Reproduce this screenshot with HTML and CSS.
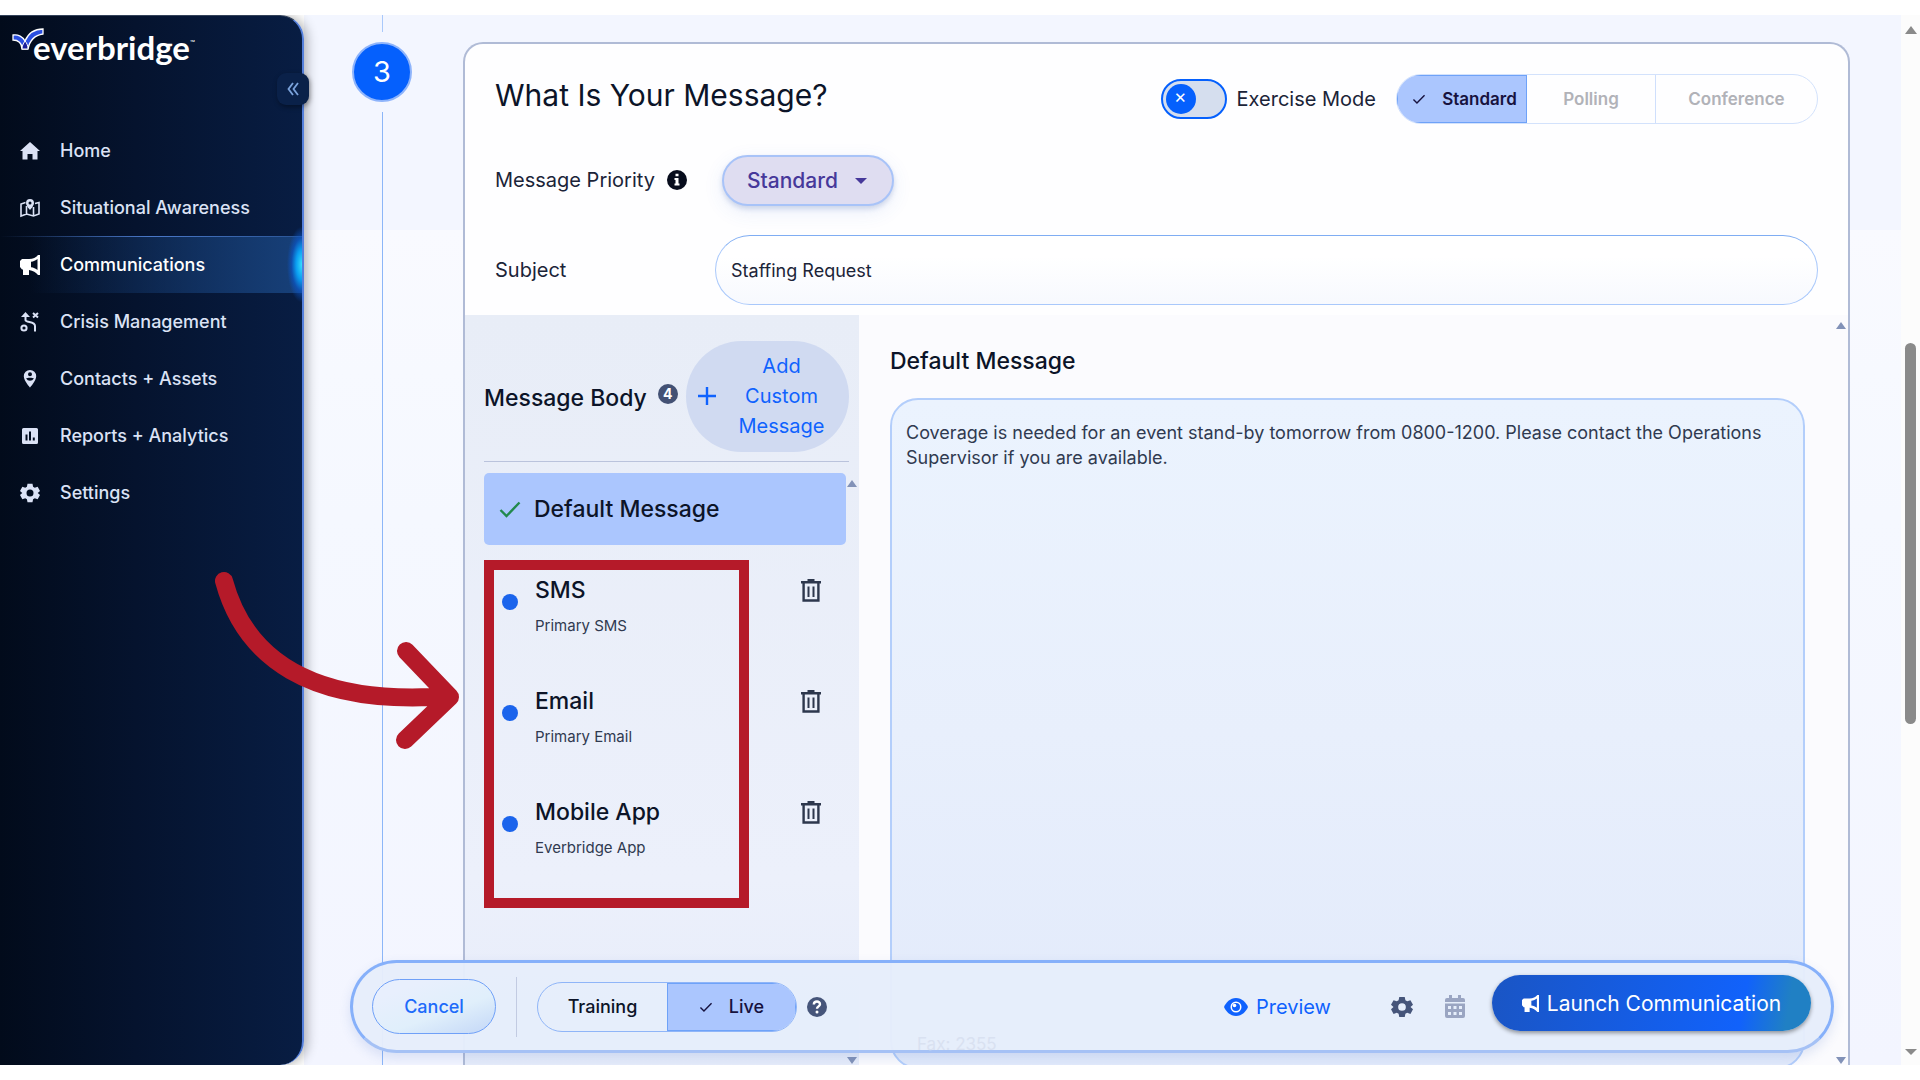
FILE: index.html
```html
<!DOCTYPE html>
<html lang="en">
<head>
    <meta charset="UTF-8">
    <meta name="viewport" content="width=device-width, initial-scale=1.0">
    <title>Everbridge - New Communication</title>
    <link rel="stylesheet" href="styles.css">
</head>
<body>
    <!-- Shared icons -->
    <svg class="sprite" aria-hidden="true">
        <symbol id="i-check" viewBox="0 0 24 24"><path d="M2.5 13l6 6L21.500 5.500" fill="none" stroke="currentColor" stroke-width="2.400"/></symbol>
        <symbol id="i-horn" viewBox="0 0 20 20"><path fill="currentColor" fill-rule="evenodd" d="M20 0v20h-2c-2-2.500-5-4.500-9-5V20H3v-5.500H2L0 12V6l2-2h7c4 0 7-1.500 9-4zM17.500 4c-1.800 1.500-4 2.500-6.500 2.800v5.500c2.500.300 4.700 1.200 6.500 2.700z"/></symbol>
        <symbol id="i-gear" viewBox="0 0 24 24"><path fill="currentColor" fill-rule="evenodd" d="M9 1h6l.7 3.600 2 1.100L21.200 4.500l2.800 5-2.700 2.500 2.700 2.500-2.800 5-3.500-1.200-2 1.100L15 23H9l-.7-3.600-2-1.100-3.500 1.200-2.800-5L2.700 12 0 9.500l2.800-5 3.500 1.200 2-1.100zM12 7.800a4.200 4.200 0 1 0 0 8.400 4.200 4.200 0 0 0 0-8.400z"/></symbol>
        <symbol id="i-trash" viewBox="0 0 20 24"><path fill="none" stroke="currentColor" stroke-width="2.400" d="M0 3.200h20M6.500 1.200h7M2.600 3v18.500h14.800V3"/><path fill="none" stroke="currentColor" stroke-width="2" d="M7.500 7.500v10.500M12.500 7.500v10.500"/></symbol>
    </svg>

    <div class="app">
        <aside class="sidebar">
            <a class="brand" href="#" aria-label="everbridge home">
                <svg class="brand-mark" viewBox="0 0 32 23">
                    <path d="M1 7C6 6 11 9 13 13C16 6 22 1 31 1V6C24 7 18 11 16 21H10C10 15 6 12 1 12Z" fill="#2b4fe0" stroke="#fff" stroke-width="1.300"/>
                    <path d="M13 13C11 16 10 18 10 21H16C16 18 15 15 13 13Z" fill="#1a1f9c" stroke="#fff" stroke-width="1"/>
                </svg>
                <span class="brand-name">everbridge</span><span class="brand-tm">™</span>
            </a>
            <button class="collapse" aria-label="Collapse menu">
                <svg viewBox="0 0 12 14" width="12" height="14"><path d="M6 1L1.500 7 6 13M11 1L6.500 7 11 13" fill="none" stroke="currentColor" stroke-width="1.800"/></svg>
            </button>
            <nav class="menu">
                <a href="#"><svg viewBox="0 0 20 20"><path fill="currentColor" d="M10 1L0 10h2.500v8.500h5v-5.500h5v5.500h5V10H20z"/></svg>Home</a>
                <a href="#"><svg viewBox="0 0 20 20"><path fill="none" stroke="currentColor" stroke-width="1.600" d="M5.500 4.500L1 6v12l5.500-2 7 2 5.500-2V4.500l-4 1M6.500 8v8M13.500 9v9"/><path fill="currentColor" fill-rule="evenodd" d="M10 1a4 4 0 0 1 4 4c0 3-4 7-4 7S6 8 6 5a4 4 0 0 1 4-4zm0 2.500a1.500 1.500 0 1 0 0 3 1.500 1.500 0 0 0 0-3z"/></svg>Situational Awareness</a>
                <a href="#" class="active" aria-current="page"><svg viewBox="0 0 20 20"><use href="#i-horn"/></svg>Communications</a>
                <a href="#"><svg viewBox="0 0 20 20"><g fill="none" stroke="currentColor" stroke-width="2"><circle cx="4" cy="16" r="2.600"/><path d="M5.500 2v6c0 3 9.500 1 9.500 6v5.500M13 1l5 4.500M18 1l-5 4.500"/></g><path fill="currentColor" d="M5.500 0L10 5H1z"/></svg>Crisis Management</a>
                <a href="#"><svg viewBox="0 0 20 20"><path fill="currentColor" fill-rule="evenodd" d="M10 1a6.200 6.200 0 0 1 6.200 6.300C16.200 12 10 18.500 10 18.500S3.800 12 3.800 7.300A6.200 6.200 0 0 1 10 1zm0 2.300a2 2 0 1 0 0 4 2 2 0 0 0 0-4zM6 9.300c1 1.700 2.400 2.500 4 2.500s3-.8 4-2.500c-1.200-.900-6.800-.9-8 0z"/></svg>Contacts + Assets</a>
                <a href="#"><svg viewBox="0 0 20 20"><path fill="currentColor" fill-rule="evenodd" d="M3.500 2h13A1.500 1.500 0 0 1 18 3.500v13a1.500 1.500 0 0 1-1.500 1.500h-13A1.500 1.500 0 0 1 2 16.500v-13A1.500 1.500 0 0 1 3.500 2zM5.500 8.500v6h2v-6zM9 5.500v9h2v-9zM12.800 11.500v3h2v-3z"/></svg>Reports + Analytics</a>
                <a href="#"><svg viewBox="0 0 24 24"><use href="#i-gear"/></svg>Settings</a>
            </nav>
        </aside>

        <main class="page">
            <div class="step">
                <span class="step-number">3</span>
            </div>

            <section class="card">
                <header class="card-top">
                    <h1>What Is Your Message?</h1>
                    <label class="switch">
                        <input type="checkbox">
                        Exercise Mode
                    </label>
                    <div class="segments types">
                        <button class="on"><svg viewBox="0 0 24 24" width="14" height="14"><use href="#i-check"/></svg>Standard</button>
                        <button disabled>Polling</button>
                        <button disabled>Conference</button>
                    </div>
                </header>

                <div class="field priority">
                    <label for="priority">Message Priority</label>
                    <svg class="info" viewBox="0 0 20 20" width="20" height="20"><circle cx="10" cy="10" r="10" fill="#070c1c"/><path fill="#fff" d="M8.500 3.700h3v2.600h-3zM7.500 8h4v5.500h1v2h-5v-2h1V10h-1z"/></svg>
                    <div class="select-wrap">
                        <select id="priority">
                            <option>Standard</option>
                            <option>High</option>
                        </select>
                    </div>
                </div>

                <div class="field subject">
                    <label for="subject">Subject</label>
                    <input type="text" id="subject" value="Staffing Request">
                </div>

                <div class="composer">
                    <div class="bodies">
                        <div class="bodies-head">
                            <h2>Message Body</h2>
                            <span class="count">4</span>
                            <button class="add">
                                <svg viewBox="0 0 18 18" width="18" height="18"><path d="M9 0v18M0 9h18" stroke="currentColor" stroke-width="2.400"/></svg>
                                <span>Add Custom Message</span>
                            </button>
                        </div>
                        <ul class="body-list">
                            <li class="selected">
                                <svg viewBox="0 0 24 24" width="24" height="24"><use href="#i-check"/></svg>
                                <h3>Default Message</h3>
                            </li>
                            <li>
                                <span class="dot"></span>
                                <div><h3>SMS</h3><p>Primary SMS</p></div>
                                <button class="trash" aria-label="Delete SMS"><svg viewBox="0 0 20 24" width="20" height="24"><use href="#i-trash"/></svg></button>
                            </li>
                            <li>
                                <span class="dot"></span>
                                <div><h3>Email</h3><p>Primary Email</p></div>
                                <button class="trash" aria-label="Delete Email"><svg viewBox="0 0 20 24" width="20" height="24"><use href="#i-trash"/></svg></button>
                            </li>
                            <li>
                                <span class="dot"></span>
                                <div><h3>Mobile App</h3><p>Everbridge App</p></div>
                                <button class="trash" aria-label="Delete Mobile App"><svg viewBox="0 0 20 24" width="20" height="24"><use href="#i-trash"/></svg></button>
                            </li>
                        </ul>
                        <i class="arrow up list-up"></i>
                        <i class="arrow down list-down"></i>
                        <div class="highlight"></div>
                    </div>
                    <div class="editor">
                        <h2><label for="message">Default Message</label></h2>
                        <textarea id="message">Coverage is needed for an event stand-by tomorrow from 0800-1200. Please contact the Operations Supervisor if you are available.</textarea>
                        <i class="arrow up pane-up"></i>
                        <i class="arrow down pane-down"></i>
                    </div>
                </div>
            </section>

            <footer class="actions">
                <button class="cancel">Cancel</button>
                <span class="rule"></span>
                <div class="segments modes">
                    <button>Training</button>
                    <button class="on"><svg viewBox="0 0 24 24" width="14" height="14"><use href="#i-check"/></svg>Live</button>
                </div>
                <svg class="help" viewBox="0 0 20 20" width="20" height="20"><circle cx="10" cy="10" r="10" fill="#46557a"/><path d="M6.800 7.500C7 3.500 13 3.700 13 7.200c0 2.200-3 2.200-3 4.600" fill="none" stroke="#fff" stroke-width="2.400"/><circle cx="10" cy="15" r="1.500" fill="#fff"/></svg>
                <span class="fax">Fax: 2355</span>
                <a class="preview" href="#">
                    <svg viewBox="0 0 24 18" width="24" height="18"><path fill="currentColor" d="M12 0c6 0 10 4.500 12 9-2 4.500-6 9-12 9S2 13.500 0 9c2-4.500 6-9 12-9z"/><circle cx="12" cy="9" r="5.500" fill="#fff"/><circle cx="12" cy="9" r="4" fill="currentColor"/><circle cx="10.500" cy="7.500" r="1.800" fill="#fff"/></svg>
                    Preview
                </a>
                <button class="icon-btn" aria-label="Settings"><svg viewBox="0 0 24 24" width="22" height="22"><use href="#i-gear"/></svg></button>
                <button class="icon-btn schedule" aria-label="Schedule" disabled><svg viewBox="0 0 20 23" width="20" height="23"><path fill="currentColor" fill-rule="evenodd" d="M4 0h3v3h6V0h3v3h2a2 2 0 0 1 2 2v2H0V5a2 2 0 0 1 2-2h2zM0 8.500h20V21a2 2 0 0 1-2 2H2a2 2 0 0 1-2-2zM3 11v3h3v-3zM8.500 11v3h3v-3zM14 11v3h3v-3zM3 17v3h3v-3zM8.500 17v3h3v-3zM14 17v3h3v-3z"/></svg></button>
                <button class="launch"><svg viewBox="0 0 20 20" width="17" height="17"><use href="#i-horn"/></svg>Launch Communication</button>
            </footer>
        </main>

        <div class="scrollbar">
            <i class="arrow up"></i>
            <span class="thumb"></span>
            <i class="arrow down"></i>
        </div>

        <svg class="pointer" viewBox="0 0 250 184" width="250" height="184"><path d="M13 12C33 86 96 138 238 127M195 82L239 128L194 171" fill="none" stroke="#b51a29" stroke-width="18" stroke-linecap="round" stroke-linejoin="round"/></svg>
    </div>
</body>
</html>
```

FILE: styles.css
```css
* {
    box-sizing: border-box;
}
body {
    font-family: Inter, "Liberation Sans", sans-serif;
    margin: 0;
    padding: 15px 0;
    height: 100vh;
    background: #fff;
    color: #0c1428;
    overflow: hidden;
}
h1, h2, h3, p, ul {
    margin: 0;
    padding: 0;
}
button, input, select, textarea {
    font-family: inherit;
    color: inherit;
}
button {
    border: none;
    background: none;
    padding: 0;
    cursor: pointer;
}
a {
    text-decoration: none;
}
svg {
    flex: none;
}
.sprite {
    display: none;
}
.app {
    display: flex;
    height: 100%;
    position: relative;
    overflow: hidden;
}

/* Sidebar */
.sidebar {
    flex: none;
    width: 304px;
    background: linear-gradient(90deg, #020b1b 0%, #05132e 45%, #081d43 100%);
    border-right: 2px solid #5580dc;
    border-top: 1px solid #33425a;
    border-radius: 0 24px 24px 0;
    box-shadow: 3px 0 12px rgba(0, 0, 0, 0.3);
    position: relative;
    z-index: 2;
}
.brand {
    display: flex;
    padding: 12px 0 0 12px;
    height: 106px;
    color: #fff;
}
.brand-mark {
    width: 32px;
    height: 23px;
}
.brand-name {
    font-family: Lato, sans-serif;
    font-size: 33px;
    font-weight: 700;
    line-height: 38px;
    margin-left: -11px;
}
.brand-tm {
    font-size: 8px;
    margin-top: 10px;
}
.collapse {
    position: absolute;
    top: 57px;
    right: -7px;
    width: 32px;
    height: 32px;
    border-radius: 9px;
    background: #0a2149;
    color: #7ba3dc;
    box-shadow: 1px 2px 5px rgba(0, 0, 0, 0.4);
}
.collapse svg {
    display: block;
    margin: auto;
}
.menu a {
    display: flex;
    align-items: center;
    gap: 20px;
    height: 57px;
    padding-left: 20px;
    font-size: 18px;
    font-weight: 500;
    color: #dbe2f5;
}
.menu svg {
    width: 20px;
    height: 20px;
}
.menu .active {
    position: relative;
    color: #fff;
    background:
        linear-gradient(90deg, transparent, #4a78c8 50%, #2a5596) top / 100% 1px no-repeat,
        linear-gradient(90deg, transparent 10%, #174079 100%);
}
.menu .active::after {
    content: "";
    position: absolute;
    right: 0;
    top: -10px;
    bottom: -10px;
    width: 16px;
    background: radial-gradient(ellipse 15px 38px at 100% 50%, #35e0ff 0%, #0a9cf0 40%, rgba(10, 90, 210, 0.6) 70%, transparent 100%);
}

/* Page */
.page {
    flex: 1;
    min-width: 0;
    display: flex;
    position: relative;
    background: linear-gradient(#f3f6ff 215px, #f9faff 215px, #f5f8ff 500px, #f3f5ff 100%);
}
.step {
    flex: none;
    width: 159px;
    background: linear-gradient(#8cb6f8, #8cb6f8) 78px 97px / 1px 100% no-repeat,
        linear-gradient(#a9c9fb, #a9c9fb) 78px 0 / 1px 17px no-repeat;
    padding: 27px 0 0 48px;
}
.step-number {
    display: block;
    width: 60px;
    height: 60px;
    border: 2px solid #8eb4fb;
    border-radius: 50%;
    background: #0560fd;
    color: #fff;
    font-size: 29px;
    line-height: 56px;
    text-align: center;
}
.card {
    flex: 1;
    min-width: 0;
    margin: 27px 51px 0 0;
    display: flex;
    flex-direction: column;
    border: 2px solid #b0bbd6;
    border-bottom: none;
    border-radius: 20px 20px 0 0;
    background: #fefeff;
}
.card-top {
    display: flex;
    align-items: center;
    height: 96px;
    padding: 14px 30px 0;
}
.card-top h1 {
    flex: 1;
    margin-bottom: 8px;
    font-size: 30px;
    font-weight: 400;
}
.switch {
    display: flex;
    align-items: center;
    gap: 10px;
    margin-right: 20px;
    font-size: 20px;
    color: #1b2438;
}
.switch input {
    appearance: none;
    margin: 0;
    width: 66px;
    height: 40px;
    border: 2px solid #0560fd;
    border-radius: 20px;
    background: #d5deee;
    padding: 3px;
}
.switch input::before {
    content: "\2715";
    display: block;
    width: 30px;
    height: 30px;
    border-radius: 50%;
    background: #0560fd;
    color: #fff;
    font-size: 15px;
    line-height: 28px;
    text-align: center;
}
.segments {
    display: flex;
    height: 50px;
    border: 1px solid #bcd3fb;
    border-radius: 25px;
    overflow: hidden;
}
.segments button {
    display: flex;
    align-items: center;
    justify-content: center;
    font-size: 17px;
    font-weight: 500;
}
.segments .on {
    gap: 16px;
    background: #abc6fe;
    color: #17123f;
    box-shadow: inset 0 0 0 1px #6ea2f8;
}
.types {
    border-color: #d3e2fc;
}
.types button {
    width: 129px;
    font-weight: 600;
}
.types button + button {
    border-right: 1px solid #cfdffc;
}
.types button:last-child {
    width: 161px;
    border: none;
}
.types button:disabled {
    color: #b1b2b8;
}
.types .on {
    width: 130px;
    padding-left: 5px;
}
.field {
    display: flex;
    align-items: center;
    padding: 0 30px;
    font-size: 20px;
    color: #1b2438;
}
.priority {
    height: 80px;
}
.info {
    margin: 0 35px 0 12px;
}
.select-wrap {
    position: relative;
}
.select-wrap::after {
    content: "";
    position: absolute;
    right: 27px;
    top: 23px;
    border: 6px solid transparent;
    border-top-color: #46389a;
    border-bottom: none;
    pointer-events: none;
}
.select-wrap select {
    display: block;
    appearance: none;
    width: 172px;
    height: 51px;
    padding: 0 23px;
    border: 2px solid #a8c3f8;
    border-radius: 26px;
    background: #dfddf1;
    color: #46389a;
    font-size: 21px;
    font-weight: 500;
    box-shadow: 0 3px 5px rgba(60, 90, 160, 0.2), 0 6px 20px rgba(60, 110, 220, 0.1);
}
.subject {
    height: 95px;
    padding-top: 5px;
}
.subject label {
    width: 220px;
}
.subject input {
    flex: 1;
    height: 70px;
    padding: 0 15px;
    border: 1px solid #a9c8fb;
    border-top-color: #7fadf3;
    border-radius: 35px;
    background: linear-gradient(#fff 30%, #f7f9fe);
    font-size: 18px;
}

/* Message list and editor */
.composer {
    flex: 1;
    min-height: 0;
    display: flex;
}
.bodies {
    flex: none;
    width: 394px;
    padding: 26px 10px 0 19px;
    background: linear-gradient(#e8edf7, #ecf0fb 75%, #e6ecfa);
    position: relative;
}
.bodies-head {
    display: flex;
    align-items: center;
    height: 121px;
    padding-bottom: 10px;
    border-bottom: 1px solid #bac3dc;
}
.bodies-head h2 {
    padding-top: 4px;
    font-size: 23px;
    font-weight: 500;
}
.count {
    width: 20px;
    height: 20px;
    margin: 0 0 4px 11px;
    border-radius: 50%;
    background: #435174;
    color: #fff;
    font-size: 14px;
    font-weight: 700;
    line-height: 20px;
    text-align: center;
}
.add {
    display: flex;
    align-items: center;
    width: 163px;
    height: 111px;
    margin-left: auto;
    padding: 0 20px 0 12px;
    gap: 18px;
    border-radius: 56px;
    background: #d0daf1;
    color: #0f62fe;
    font-size: 20px;
    line-height: 30px;
}
.body-list {
    list-style: none;
    padding: 11px 3px 0 0;
}
.body-list li {
    display: flex;
    height: 111px;
    padding: 16px 25px 0 18px;
}
.body-list h3 {
    font-size: 23px;
    font-weight: 500;
    line-height: 28px;
}
.body-list p {
    margin-top: 13px;
    font-size: 15px;
    line-height: 18px;
    color: #303a50;
}
.body-list .selected {
    height: 72px;
    margin-bottom: 15px;
    padding: 0 14px;
    align-items: center;
    gap: 12px;
    border-radius: 5px;
    background: #abc6fe;
}
.selected svg {
    color: #22894d;
}
.dot {
    width: 16px;
    height: 16px;
    margin: 18px 17px 0 0;
    border-radius: 50%;
    background: #1b64ec;
}
.trash {
    margin: 3px 0 0 auto;
    align-self: flex-start;
    height: 24px;
    color: #2d374d;
}
.highlight {
    position: absolute;
    left: 19px;
    top: 245px;
    width: 265px;
    height: 348px;
    border: 10px solid #b51a29;
    pointer-events: none;
}
.editor {
    flex: 1;
    min-width: 0;
    display: flex;
    flex-direction: column;
    padding: 32px 43px 0 31px;
    background: #fbfbfe;
    position: relative;
}
.editor h2 {
    height: 51px;
    font-size: 23px;
    font-weight: 500;
    line-height: 28px;
}
.editor textarea {
    flex: 1;
    margin-bottom: -4px;
    padding: 20px 14px;
    border: 2px solid #b3cefb;
    border-radius: 28px;
    background: linear-gradient(#ebf3fe, #e8effc 50%, #e2eafb);
    color: #303a50;
    font-size: 18px;
    line-height: 25px;
    resize: none;
}
.arrow {
    border: 5px solid transparent;
}
.arrow.up {
    border-bottom: 7px solid #8292b8;
    border-top: none;
}
.arrow.down {
    border-top: 7px solid #8292b8;
    border-bottom: none;
}
.list-up, .list-down, .pane-up, .pane-down {
    position: absolute;
    right: 2px;
}
.list-up {
    top: 165px;
}
.pane-up {
    top: 7px;
}
.list-down, .pane-down {
    bottom: 1px;
}

/* Bottom action bar */
.actions {
    position: absolute;
    left: 46px;
    right: 67px;
    bottom: 12px;
    height: 93px;
    display: flex;
    align-items: center;
    padding: 0 20px 0 19px;
    border: 3px solid #86b0fa;
    border-bottom-color: #a5c1f5;
    border-radius: 47px;
    background: rgba(230, 237, 251, 0.96);
    box-shadow: 0 5px 12px rgba(60, 100, 190, 0.15);
}
.cancel {
    width: 124px;
    height: 55px;
    border: 1px solid #6fa0f8;
    border-radius: 28px;
    background: linear-gradient(160deg, #e8effd 20%, #e0effb 60%, #c3d7f7);
    color: #1d6bfa;
    font-size: 18px;
    font-weight: 500;
}
.rule {
    width: 1px;
    height: 60px;
    margin: 0 20px;
    background: #c2cbe2;
}
.modes button {
    width: 129px;
    font-size: 18px;
}
.modes {
    border-color: #8fb5f8;
}
.help {
    margin-left: 10px;
}
.fax {
    align-self: flex-end;
    margin-left: 90px;
    font-size: 17px;
    line-height: 12px;
    color: #d9e1f1;
}
.preview {
    display: flex;
    align-items: center;
    gap: 8px;
    margin: 0 60px 0 auto;
    color: #0f62fe;
    font-size: 20px;
}
.icon-btn {
    display: flex;
    margin-right: 32px;
    color: #46557a;
}
.schedule {
    margin-right: 27px;
    color: #9aa5c2;
}
.launch {
    display: flex;
    align-items: center;
    justify-content: center;
    gap: 8px;
    width: 319px;
    height: 56px;
    margin-bottom: 7px;
    border-radius: 28px;
    background: linear-gradient(100deg, #1a55c4, #1162fb 78%, #2080c4 92%);
    color: #fff;
    font-size: 21px;
    font-weight: 400;
    box-shadow: 0 2px 4px rgba(0, 0, 0, 0.4);
}

/* Window scrollbar */
.scrollbar {
    flex: none;
    width: 19px;
    padding: 11px 0 10px;
    display: flex;
    flex-direction: column;
    align-items: center;
    background: #fcfcfc;
}
.scrollbar .arrow {
    border-width: 6px;
    border-top-color: #8a8a8a;
}
.scrollbar .up {
    border-top: none;
    border-bottom: 8px solid #8a8a8a;
}
.scrollbar .down {
    border-bottom: none;
    margin-top: auto;
}
.scrollbar .thumb {
    width: 11px;
    height: 37%;
    margin-top: 309px;
    border-radius: 6px;
    background: #8a8a8a;
}

/* Annotation arrow over the page */
.pointer {
    position: absolute;
    left: 211px;
    top: 554px;
    z-index: 3;
}
```
